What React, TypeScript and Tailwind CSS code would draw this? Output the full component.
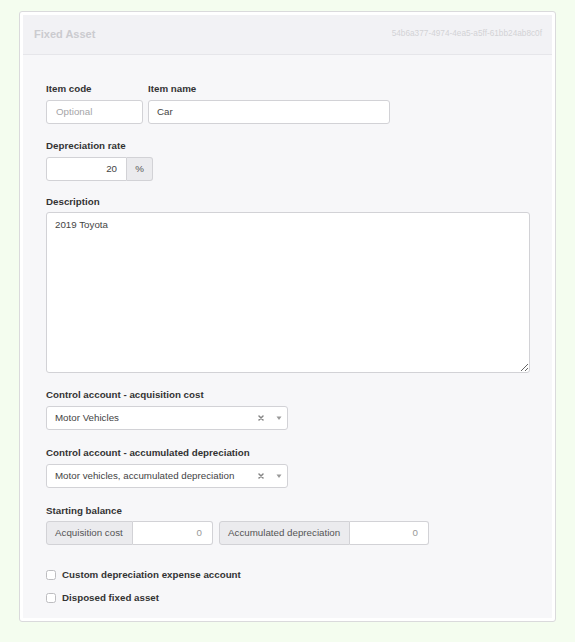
import React from "react";

const font = { fontFamily: '"Liberation Sans", Arial, Helvetica, sans-serif' };

function Label({ children }: { children: React.ReactNode }) {
  return <div className="text-[9.75px] leading-[12px] font-bold text-[#333]">{children}</div>;
}

function Caret() {
  return (
    <svg width="6" height="4" viewBox="0 0 6 4" className="block">
      <path d="M0.5 0.5 L5.5 0.5 L3 4 Z" fill="#999" />
    </svg>
  );
}

function Cross() {
  return (
    <svg width="6" height="6" viewBox="0 0 6 6" className="block">
      <path d="M1 1 L5 5 M5 1 L1 5" stroke="#858585" strokeWidth="1.5" strokeLinecap="round" />
    </svg>
  );
}

function Select({ value }: { value: string }) {
  return (
    <div className="mt-[5px] h-[24px] w-[242px] bg-white border border-[#d2d2d6] rounded-[3px] flex items-center pl-[8px] pr-[5px]">
      <span className="flex-1 text-[9.75px] text-[#444] truncate">{value}</span>
      <span className="ml-[6px] mr-[12px]"><Cross /></span>
      <Caret />
    </div>
  );
}

function Check({ label }: { label: string }) {
  return (
    <div className="flex items-center h-[14px]">
      <span className="w-[10px] h-[10px] rounded-[2.5px] border border-[#bdbdc0] bg-white" />
      <span className="ml-[6px] text-[9.75px] font-bold text-[#333]">{label}</span>
    </div>
  );
}

export default function App() {
  return (
    <div className="min-h-[642px] bg-[#f4fdef] pt-[11px] pl-[19px]" style={font}>
      <div className="w-[537px] h-[611px] border border-[#dadadc] rounded-[3px] bg-white p-[3px]">
        <div className="h-full bg-[#f7f7f9] flex flex-col">
          <div className="h-[40px] shrink-0 border-b border-[#e6e6ea] bg-[#f2f2f5] flex items-center justify-between pl-[11px] pr-[10px]">
            <span className="text-[11px] font-bold text-[#cbcbcf]">Fixed Asset</span>
            <span className="text-[8.25px] text-[#d2d2d6]">54b6a377-4974-4ea5-a5ff-61bb24ab8c0f</span>
          </div>
          <div className="pl-[23px] pt-[28px]">
            <div className="flex gap-[5px]">
              <div className="w-[97px]">
                <Label>Item code</Label>
                <div className="mt-[5px] h-[24px] bg-white border border-[#d2d2d6] rounded-[3px] flex items-center px-[9px] text-[9.75px] text-[#a5a5a8]">
                  Optional
                </div>
              </div>
              <div className="w-[242px]">
                <Label>Item name</Label>
                <div className="mt-[5px] h-[24px] bg-white border border-[#d2d2d6] rounded-[3px] flex items-center px-[8px] text-[9.75px] text-[#444]">
                  Car
                </div>
              </div>
            </div>

            <div className="mt-[16px]">
              <Label>Depreciation rate</Label>
              <div className="mt-[5px] h-[24px] w-[107px] flex">
                <div className="w-[81px] bg-white border border-[#d2d2d6] rounded-l-[3px] flex items-center justify-end pr-[9px] text-[9.75px] text-[#444]">
                  20
                </div>
                <div className="flex-1 bg-[#ebebee] border border-l-0 border-[#d2d2d6] rounded-r-[3px] flex items-center justify-center text-[9.75px] text-[#555]">
                  %
                </div>
              </div>
            </div>

            <div className="mt-[15px]">
              <Label>Description</Label>
              <textarea
                defaultValue="2019 Toyota"
                className="mt-[4px] block w-[484px] h-[161px] bg-white border border-[#d2d2d6] rounded-[3px] px-[8px] py-[6px] text-[9.75px] leading-[12px] text-[#444] outline-none"
                style={font}
              />
            </div>

            <div className="mt-[16px]">
              <Label>Control account - acquisition cost</Label>
              <Select value="Motor Vehicles" />
            </div>

            <div className="mt-[17px]">
              <Label>Control account - accumulated depreciation</Label>
              <Select value="Motor vehicles, accumulated depreciation" />
            </div>

            <div className="mt-[17px]">
              <Label>Starting balance</Label>
              <div className="mt-[4px] flex gap-[6px]">
                <div className="flex h-[24px]">
                  <div className="w-[87px] bg-[#ebebee] border border-[#d2d2d6] rounded-l-[3px] flex items-center pl-[8px] text-[9.75px] text-[#555]">
                    Acquisition cost
                  </div>
                  <div className="w-[80px] bg-white border border-l-0 border-[#d2d2d6] rounded-r-[3px] flex items-center justify-end pr-[10px] text-[9.75px] text-[#999]">
                    0
                  </div>
                </div>
                <div className="flex h-[24px]">
                  <div className="w-[131px] bg-[#ebebee] border border-[#d2d2d6] rounded-l-[3px] flex items-center pl-[8px] text-[9.75px] text-[#555]">
                    Accumulated depreciation
                  </div>
                  <div className="w-[79px] bg-white border border-l-0 border-[#d2d2d6] rounded-r-[3px] flex items-center justify-end pr-[10px] text-[9.75px] text-[#999]">
                    0
                  </div>
                </div>
              </div>
            </div>

            <div className="mt-[23px]">
              <Check label="Custom depreciation expense account" />
            </div>
            <div className="mt-[9px]">
              <Check label="Disposed fixed asset" />
            </div>
          </div>
        </div>
      </div>
    </div>
  );
}
